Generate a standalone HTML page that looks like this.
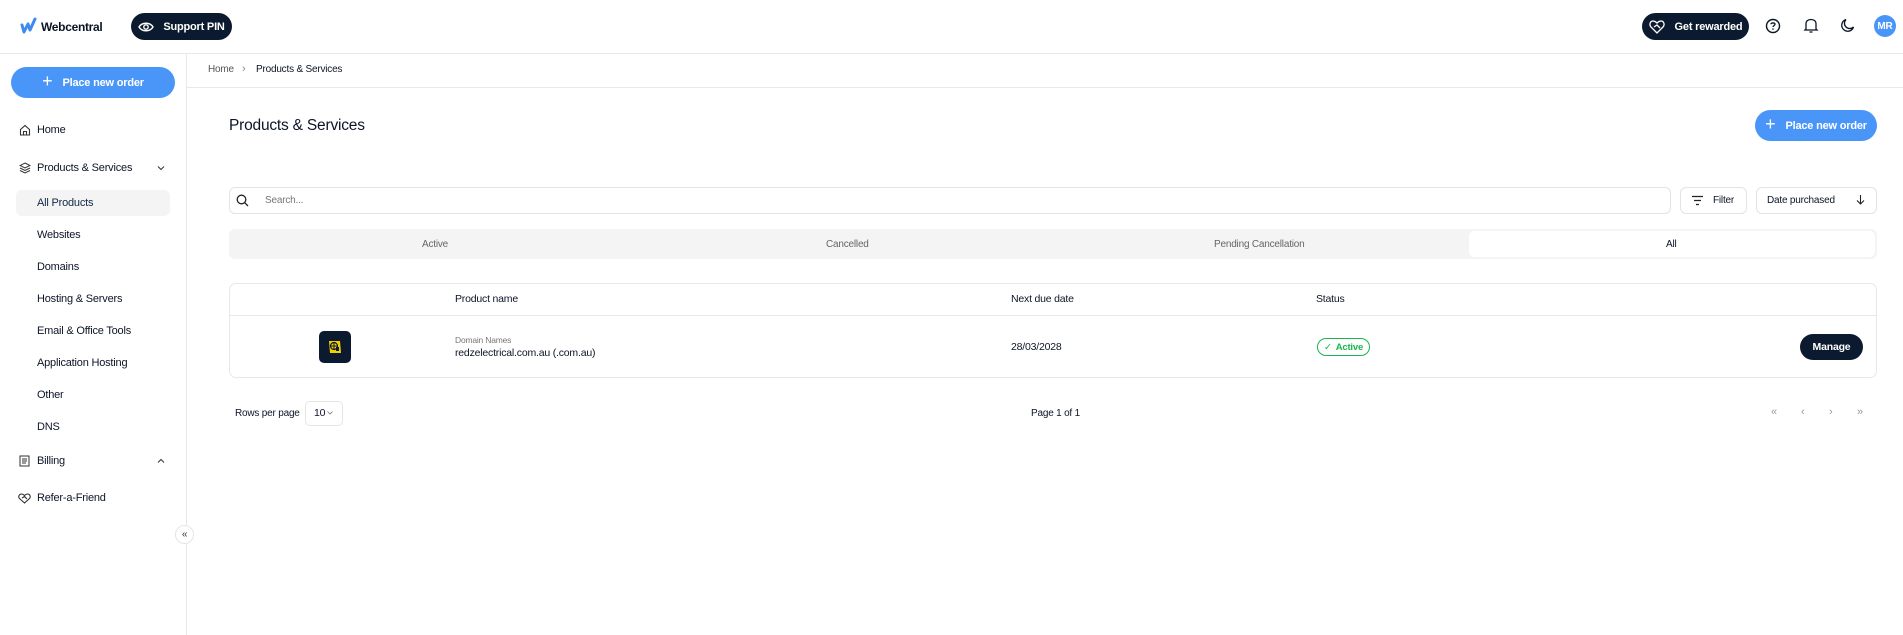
<!DOCTYPE html>
<html><head><meta charset="utf-8"><style>
*{box-sizing:border-box;margin:0;padding:0}
body{width:1903px;height:635px;background:#fff;font-family:"Liberation Sans",sans-serif;color:#0b1526;position:relative;overflow:hidden;font-size:12px;letter-spacing:-0.2px}
.a{position:absolute}
.t{position:absolute;white-space:nowrap;line-height:1}
.btn-dark{background:#0b1a2e;color:#fff;border-radius:14px;display:flex;align-items:center;justify-content:center;font-weight:bold;font-size:11px}
.btn-blue{background:#4996f8;color:#fff;border-radius:16px;display:flex;align-items:center;justify-content:center;font-weight:bold;font-size:11px}
.nav{position:absolute;left:37px;font-size:11px;line-height:1}
.ico{position:absolute}
</style></head><body>
<!-- header -->
<div class="a" style="left:0;top:53px;width:1903px;height:1px;background:#e8e8e8"></div>
<svg class="ico" style="left:20px;top:17px" width="20" height="18" viewBox="0 0 20 18"><path d="M2 8 L4 15 L8 7 L10 13 L15 2" fill="none" stroke="#3d8bf0" stroke-width="3" stroke-linecap="round" stroke-linejoin="round"/></svg>
<div class="t" style="left:41px;top:21px;font-weight:bold;font-size:12px;letter-spacing:-0.3px">Webcentral</div>
<div class="a btn-dark" style="left:131px;top:13px;width:101px;height:27px"><svg width="16" height="12" viewBox="0 0 16 12" style="margin-right:9px"><path d="M1 6 C4 1 12 1 15 6 C12 11 4 11 1 6Z" fill="none" stroke="#fff" stroke-width="1.4"/><circle cx="8" cy="6" r="2.2" fill="none" stroke="#fff" stroke-width="1.4"/></svg>Support PIN</div>
<div class="a btn-dark" style="left:1642px;top:13px;width:107px;height:27px"><svg width="16" height="14" viewBox="0 0 16 14" style="margin-right:10px"><path d="M8 13 L2 7 C0 5 1 1 4 1 C6 1 7 2 8 3 C9 2 10 1 12 1 C15 1 16 5 14 7Z M5 7 L8 5 L11 8" fill="none" stroke="#fff" stroke-width="1.3"/></svg>Get rewarded</div>
<svg class="ico" style="left:1765px;top:18px" width="16" height="16" viewBox="0 0 16 16"><circle cx="8" cy="8" r="6.5" fill="none" stroke="#0b1526" stroke-width="1.4"/><path d="M6 6.3 C6 4.5 10 4.5 10 6.3 C10 7.5 8 7.6 8 9" fill="none" stroke="#0b1526" stroke-width="1.3"/><circle cx="8" cy="11" r=".8" fill="#0b1526"/></svg>
<svg class="ico" style="left:1803px;top:17px" width="16" height="17" viewBox="0 0 16 17"><path d="M3 12 L3 7 C3 4 5 2.5 8 2.5 C11 2.5 13 4 13 7 L13 12 L14 13 L2 13Z M6.5 15 L9.5 15" fill="none" stroke="#0b1526" stroke-width="1.3"/></svg>
<svg class="ico" style="left:1840px;top:18px" width="15" height="15" viewBox="0 0 15 15"><path d="M6 1.5 A6 6 0 1 0 13.5 9 A5 5 0 0 1 6 1.5Z" fill="none" stroke="#0b1526" stroke-width="1.3"/></svg>
<div class="a" style="left:1874px;top:15px;width:22px;height:22px;border-radius:50%;background:#4996f8;color:#fff;font-size:10px;font-weight:bold;display:flex;align-items:center;justify-content:center">MR</div>
<!-- sidebar -->
<div class="a" style="left:186px;top:53px;width:1px;height:582px;background:#e8e8e8"></div>
<div class="a btn-blue" style="left:11px;top:67px;width:164px;height:31px"><span style="font-size:18px;font-weight:normal;margin-right:10px;margin-top:-2px">+</span>Place new order</div>
<svg class="ico" style="left:19px;top:124px" width="12" height="12" viewBox="0 0 12 12"><path d="M1.5 5.5 L6 1.5 L10.5 5.5 L10.5 11 L1.5 11Z M4.5 11 L4.5 7.5 L7.5 7.5 L7.5 11" fill="none" stroke="#333" stroke-width="1.1"/></svg>
<div class="nav" style="top:125px">Home</div>
<svg class="ico" style="left:19px;top:162px" width="12" height="12" viewBox="0 0 12 12"><path d="M6 1 L11 3.5 L6 6 L1 3.5Z M1 6 L6 8.5 L11 6 M1 8.5 L6 11 L11 8.5" fill="none" stroke="#333" stroke-width="1"/></svg>
<div class="nav" style="top:163px">Products &amp; Services</div>
<svg class="ico" style="left:157px;top:165px" width="8" height="6" viewBox="0 0 8 6"><path d="M1 1.5 L4 4.5 L7 1.5" fill="none" stroke="#333" stroke-width="1"/></svg>
<div class="a" style="left:16px;top:190px;width:154px;height:26px;background:#f4f4f4;border-radius:6px"></div>
<div class="nav" style="top:198px;color:#122845">All Products</div>
<div class="nav" style="top:230px">Websites</div>
<div class="nav" style="top:262px">Domains</div>
<div class="nav" style="top:294px">Hosting &amp; Servers</div>
<div class="nav" style="top:326px">Email &amp; Office Tools</div>
<div class="nav" style="top:358px">Application Hosting</div>
<div class="nav" style="top:390px">Other</div>
<div class="nav" style="top:422px">DNS</div>
<svg class="ico" style="left:19px;top:455px" width="11" height="12" viewBox="0 0 11 12"><path d="M1 1 L10 1 L10 11 L1 11Z M3 4 L8 4 M3 6 L8 6 M3 8 L7 8" fill="none" stroke="#333" stroke-width="1"/></svg>
<div class="nav" style="top:456px">Billing</div>
<svg class="ico" style="left:157px;top:458px" width="8" height="6" viewBox="0 0 8 6"><path d="M1 4.5 L4 1.5 L7 4.5" fill="none" stroke="#333" stroke-width="1"/></svg>
<svg class="ico" style="left:18px;top:493px" width="13" height="11" viewBox="0 0 13 11"><path d="M6.5 10 L1.5 5.5 C0 4 1 1 3.5 1 C5 1 6 2 6.5 2.5 C7 2 8 1 9.5 1 C12 1 13 4 11.5 5.5Z M4 5 L6.5 3.5 L9 6" fill="none" stroke="#333" stroke-width="1.1"/></svg>
<div class="nav" style="top:493px">Refer-a-Friend</div>
<div class="a" style="left:175px;top:525px;width:19px;height:19px;border-radius:50%;border:1px solid #e5e5e5;background:#fff;font-size:10px;display:flex;align-items:center;justify-content:center;color:#333">&laquo;</div>
<!-- breadcrumb -->
<div class="t" style="left:208px;top:65px;font-size:10px;color:#555">Home</div>
<div class="t" style="left:242px;top:64px;font-size:11px;color:#888">&rsaquo;</div>
<div class="t" style="left:256px;top:65px;font-size:10px">Products &amp; Services</div>
<div class="a" style="left:187px;top:87px;width:1716px;height:1px;background:#e8e8e8"></div>
<div class="t" style="left:229px;top:118px;font-size:15.5px">Products &amp; Services</div>
<div class="a btn-blue" style="left:1755px;top:110px;width:122px;height:31px"><span style="font-size:18px;font-weight:normal;margin-right:10px;margin-top:-2px">+</span>Place new order</div>
<!-- search -->
<div class="a" style="left:229px;top:187px;width:1442px;height:27px;border:1px solid #e3e3e3;border-radius:6px"></div>
<svg class="ico" style="left:236px;top:194px" width="13" height="13" viewBox="0 0 13 13"><circle cx="5.5" cy="5.5" r="4.3" fill="none" stroke="#222" stroke-width="1.3"/><path d="M8.7 8.7 L12 12" stroke="#222" stroke-width="1.3"/></svg>
<div class="t" style="left:265px;top:196px;font-size:10px;color:#777">Search...</div>
<div class="a" style="left:1680px;top:187px;width:67px;height:27px;border:1px solid #e3e3e3;border-radius:6px"></div>
<svg class="ico" style="left:1691px;top:195px" width="13" height="11" viewBox="0 0 13 11"><path d="M1 1.5 L12 1.5 M3 5.5 L10 5.5 M5 9.5 L8 9.5" stroke="#222" stroke-width="1.3"/></svg>
<div class="t" style="left:1713px;top:196px;font-size:10px">Filter</div>
<div class="a" style="left:1756px;top:187px;width:121px;height:27px;border:1px solid #e3e3e3;border-radius:6px"></div>
<div class="t" style="left:1767px;top:196px;font-size:10px">Date purchased</div>
<svg class="ico" style="left:1856px;top:194px" width="9" height="11" viewBox="0 0 9 11"><path d="M4.5 1 L4.5 10 M1 6.5 L4.5 10 L8 6.5" fill="none" stroke="#222" stroke-width="1.1"/></svg>
<!-- tabs -->
<div class="a" style="left:229px;top:229px;width:1648px;height:30px;background:#f4f4f4;border-radius:6px"></div>
<div class="a" style="left:1469px;top:231px;width:406px;height:26px;background:#fff;border-radius:5px"></div>
<div class="t" style="left:422px;top:240px;font-size:10px;color:#666">Active</div>
<div class="t" style="left:826px;top:240px;font-size:10px;color:#666">Cancelled</div>
<div class="t" style="left:1214px;top:240px;font-size:10px;color:#666">Pending Cancellation</div>
<div class="t" style="left:1666px;top:240px;font-size:10px">All</div>
<!-- table -->
<div class="a" style="left:229px;top:283px;width:1648px;height:95px;border:1px solid #e8e8e8;border-radius:7px"></div>
<div class="a" style="left:229px;top:315px;width:1648px;height:1px;background:#e8e8e8"></div>
<div class="t" style="left:455px;top:294px;font-size:10.5px">Product name</div>
<div class="t" style="left:1011px;top:294px;font-size:10.5px">Next due date</div>
<div class="t" style="left:1316px;top:294px;font-size:10.5px">Status</div>
<div class="a" style="left:319px;top:331px;width:32px;height:32px;background:#0b1a2e;border-radius:5px"></div>
<svg class="ico" style="left:327px;top:339px" width="16" height="16" viewBox="0 0 16 16"><path d="M2 2 L13 2 L14 14 L3 14Z" fill="#f5d000"/><circle cx="7" cy="7" r="3.5" fill="none" stroke="#0b1a2e" stroke-width="1.2"/><path d="M3.5 7 L10.5 7 M7 3.5 L7 10.5" stroke="#0b1a2e" stroke-width="1"/><rect x="9" y="8" width="3" height="4" fill="#0b1a2e"/></svg>
<div class="t" style="left:455px;top:336px;font-size:8.5px;color:#777">Domain Names</div>
<div class="t" style="left:455px;top:348px;font-size:10.5px">redzelectrical.com.au (.com.au)</div>
<div class="t" style="left:1011px;top:342px;font-size:10.5px">28/03/2028</div>
<div class="a" style="left:1317px;top:338px;width:53px;height:18px;border:1px solid #18b64d;border-radius:9px;color:#18b64d;font-size:9.5px;font-weight:bold;display:flex;align-items:center;justify-content:center"><span style="font-weight:normal;margin-right:4px">&#10003;</span>Active</div>
<div class="a btn-dark" style="left:1800px;top:334px;width:63px;height:26px;font-size:10.5px">Manage</div>
<!-- pagination -->
<div class="t" style="left:235px;top:409px;font-size:10px">Rows per page</div>
<div class="a" style="left:305px;top:401px;width:38px;height:25px;border:1px solid #e5e5e5;border-radius:5px"></div>
<div class="t" style="left:314px;top:408px;font-size:10.5px">10</div>
<svg class="ico" style="left:327px;top:411px" width="6" height="4" viewBox="0 0 6 4"><path d="M0.5 0.5 L3 3 L5.5 0.5" fill="none" stroke="#777" stroke-width=".8"/></svg>
<div class="t" style="left:1031px;top:409px;font-size:10px">Page 1 of 1</div>
<div class="t" style="left:1771px;top:407px;font-size:11px;color:#999">&laquo;</div>
<div class="t" style="left:1801px;top:407px;font-size:11px;color:#999">&lsaquo;</div>
<div class="t" style="left:1829px;top:407px;font-size:11px;color:#999">&rsaquo;</div>
<div class="t" style="left:1857px;top:407px;font-size:11px;color:#999">&raquo;</div>
</body></html>
